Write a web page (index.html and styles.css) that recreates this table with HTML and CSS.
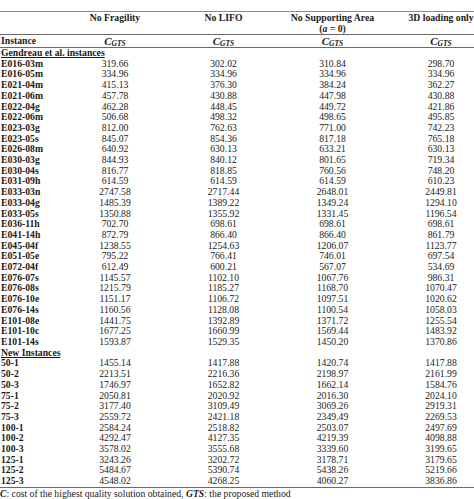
FILE: index.html
```html
<!DOCTYPE html>
<html>
<head>
<meta charset="utf-8">
<link rel="stylesheet" href="styles.css">
</head>
<body>
<table class="results">
  <colgroup>
    <col class="c-inst"><col class="c-a"><col class="c-b"><col class="c-c"><col class="c-d">
  </colgroup>
  <thead>
    <tr class="head-1">
      <th></th>
      <th>No Fragility</th>
      <th>No LIFO</th>
      <th>No Supporting Area<br>(<i>a</i> = 0)</th>
      <th>3D loading only</th>
    </tr>
    <tr class="head-2">
      <th class="inst">Instance</th>
      <th><span class="cg">C<sub>GTS</sub></span></th>
      <th><span class="cg">C<sub>GTS</sub></span></th>
      <th><span class="cg">C<sub>GTS</sub></span></th>
      <th><span class="cg">C<sub>GTS</sub></span></th>
    </tr>
  </thead>
  <tbody>
    <tr><td class="section" colspan="3">Gendreau et al. instances</td><td></td><td></td></tr>
    <tr><td class="inst">E016-03m</td><td>319.66</td><td>302.02</td><td>310.84</td><td>298.70</td></tr>
    <tr><td class="inst">E016-05m</td><td>334.96</td><td>334.96</td><td>334.96</td><td>334.96</td></tr>
    <tr><td class="inst">E021-04m</td><td>415.13</td><td>376.30</td><td>384.24</td><td>362.27</td></tr>
    <tr><td class="inst">E021-06m</td><td>457.78</td><td>430.88</td><td>447.98</td><td>430.88</td></tr>
    <tr><td class="inst">E022-04g</td><td>462.28</td><td>448.45</td><td>449.72</td><td>421.86</td></tr>
    <tr><td class="inst">E022-06m</td><td>506.68</td><td>498.32</td><td>498.65</td><td>495.85</td></tr>
    <tr><td class="inst">E023-03g</td><td>812.00</td><td>762.63</td><td>771.00</td><td>742.23</td></tr>
    <tr><td class="inst">E023-05s</td><td>845.07</td><td>854.36</td><td>817.18</td><td>765.18</td></tr>
    <tr><td class="inst">E026-08m</td><td>640.92</td><td>630.13</td><td>633.21</td><td>630.13</td></tr>
    <tr><td class="inst">E030-03g</td><td>844.93</td><td>840.12</td><td>801.65</td><td>719.34</td></tr>
    <tr><td class="inst">E030-04s</td><td>816.77</td><td>818.85</td><td>760.56</td><td>748.20</td></tr>
    <tr><td class="inst">E031-09h</td><td>614.59</td><td>614.59</td><td>614.59</td><td>610.23</td></tr>
    <tr><td class="inst">E033-03n</td><td>2747.58</td><td>2717.44</td><td>2648.01</td><td>2449.81</td></tr>
    <tr><td class="inst">E033-04g</td><td>1485.39</td><td>1389.22</td><td>1349.24</td><td>1294.10</td></tr>
    <tr><td class="inst">E033-05s</td><td>1350.88</td><td>1355.92</td><td>1331.45</td><td>1196.54</td></tr>
    <tr><td class="inst">E036-11h</td><td>702.70</td><td>698.61</td><td>698.61</td><td>698.61</td></tr>
    <tr><td class="inst">E041-14h</td><td>872.79</td><td>866.40</td><td>866.40</td><td>861.79</td></tr>
    <tr><td class="inst">E045-04f</td><td>1238.55</td><td>1254.63</td><td>1206.07</td><td>1123.77</td></tr>
    <tr><td class="inst">E051-05e</td><td>795.22</td><td>766.41</td><td>746.01</td><td>697.54</td></tr>
    <tr><td class="inst">E072-04f</td><td>612.49</td><td>600.21</td><td>567.07</td><td>534.69</td></tr>
    <tr><td class="inst">E076-07s</td><td>1145.57</td><td>1102.10</td><td>1067.76</td><td>986.31</td></tr>
    <tr><td class="inst">E076-08s</td><td>1215.79</td><td>1185.27</td><td>1168.70</td><td>1070.47</td></tr>
    <tr><td class="inst">E076-10e</td><td>1151.17</td><td>1106.72</td><td>1097.51</td><td>1020.62</td></tr>
    <tr><td class="inst">E076-14s</td><td>1160.56</td><td>1128.08</td><td>1100.54</td><td>1058.03</td></tr>
    <tr><td class="inst">E101-08e</td><td>1441.75</td><td>1392.89</td><td>1371.72</td><td>1255.54</td></tr>
    <tr><td class="inst">E101-10c</td><td>1677.25</td><td>1660.99</td><td>1569.44</td><td>1483.92</td></tr>
    <tr><td class="inst">E101-14s</td><td>1593.87</td><td>1529.35</td><td>1450.20</td><td>1370.86</td></tr>
    <tr><td class="section" colspan="2">New Instances</td><td></td><td></td><td></td></tr>
    <tr><td class="inst">50-1</td><td>1455.14</td><td>1417.88</td><td>1420.74</td><td>1417.88</td></tr>
    <tr><td class="inst">50-2</td><td>2213.51</td><td>2216.36</td><td>2198.97</td><td>2161.99</td></tr>
    <tr><td class="inst">50-3</td><td>1746.97</td><td>1652.82</td><td>1662.14</td><td>1584.76</td></tr>
    <tr><td class="inst">75-1</td><td>2050.81</td><td>2020.92</td><td>2016.30</td><td>2024.10</td></tr>
    <tr><td class="inst">75-2</td><td>3177.40</td><td>3109.49</td><td>3069.26</td><td>2919.31</td></tr>
    <tr><td class="inst">75-3</td><td>2559.72</td><td>2421.18</td><td>2349.49</td><td>2269.53</td></tr>
    <tr><td class="inst">100-1</td><td>2584.24</td><td>2518.82</td><td>2503.07</td><td>2497.69</td></tr>
    <tr><td class="inst">100-2</td><td>4292.47</td><td>4127.35</td><td>4219.39</td><td>4098.88</td></tr>
    <tr><td class="inst">100-3</td><td>3578.02</td><td>3555.68</td><td>3339.60</td><td>3199.65</td></tr>
    <tr><td class="inst">125-1</td><td>3243.26</td><td>3202.72</td><td>3178.71</td><td>3179.65</td></tr>
    <tr><td class="inst">125-2</td><td>5484.67</td><td>5390.74</td><td>5438.26</td><td>5219.66</td></tr>
    <tr><td class="inst">125-3</td><td>4548.02</td><td>4268.25</td><td>4060.27</td><td>3836.86</td></tr>
  </tbody>
</table>
<p class="note"><b><i>C</i></b>: cost of the highest quality solution obtained, <b><i>GTS</i></b>: the proposed method</p>
</body>
</html>
```

FILE: styles.css
```css
html, body {
  margin: 0;
  padding: 0;
  background: #ffffff;
  overflow: hidden;
}

body {
  font-family: "Liberation Serif", "Times New Roman", serif;
  font-size: 9.7px;
  color: #1a1a1a;
  width: 474px;
}

.results {
  margin-top: 11px;
  width: 492px;
  table-layout: fixed;
  border-collapse: collapse;
  border-top: 1px solid #8a8a8a;
  border-bottom: 1px solid #6a6a6a;
}

.c-inst { width: 58px; }
.c-a { width: 114px; }
.c-b { width: 103px; }
.c-c { width: 115px; }
.c-d { width: 102px; }

.results th,
.results td {
  padding: 0;
  white-space: nowrap;
  text-align: center;
}

.head-1 th {
  font-weight: bold;
  line-height: 10.5px;
  height: 21px;
  vertical-align: top;
  padding-top: 1px;
  border-bottom: 1px solid #6a6a6a;
}

.head-2 th {
  font-weight: bold;
  height: 12px;
  line-height: 12px;
  border-bottom: 1px solid #6a6a6a;
}

.results th.inst,
.results td.inst {
  text-align: left;
  padding-left: 1px;
  font-weight: bold;
}

.cg {
  display: inline-block;
  height: 12px;
  line-height: 12px;
  vertical-align: top;
  font-style: italic;
  font-weight: bold;
  font-size: 11px;
}

.cg sub {
  font-size: 7.5px;
  vertical-align: -1px;
  line-height: 0;
}

.results tbody td {
  height: 10.7px;
  line-height: 10.7px;
}

.results td.section {
  text-align: left;
  padding-left: 1px;
  font-weight: bold;
  text-decoration: underline;
}

.note {
  margin: 0;
  line-height: 11px;
  white-space: nowrap;
}
```
